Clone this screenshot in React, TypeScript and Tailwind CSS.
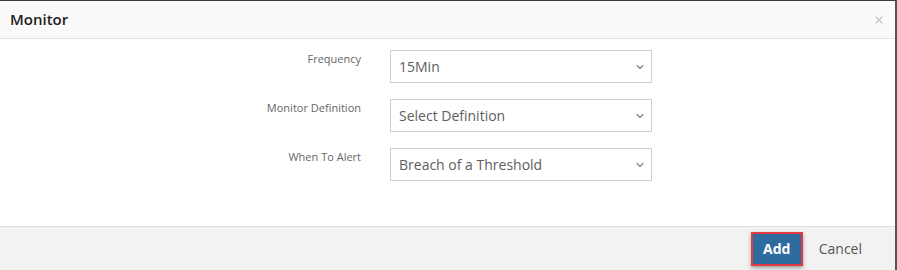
import { ChevronDown, X } from "lucide-react";

const fields = [
  { label: "Frequency", value: "15Min" },
  { label: "Monitor Definition", value: "Select Definition" },
  { label: "When To Alert", value: "Breach of a Threshold" },
];

export default function App() {
  return (
    <div className="w-[897px] h-[270px] bg-white border-t border-t-[#3a3a3a] border-r-2 border-r-[#555] flex flex-col font-['Open_Sans',sans-serif] overflow-hidden">
      {/* Header */}
      <div className="h-[38px] shrink-0 bg-[#fafafa] border-b border-[#e3e3e3] flex items-center justify-between pl-[10px] pr-[10px]">
        <h1 className="text-[15px] font-semibold text-[#222]">Monitor</h1>
        <X size={12} strokeWidth={2.5} className="text-[#c4c4c4]" />
      </div>

      {/* Body */}
      <div className="flex-1 pt-[11px] flex flex-col gap-[16px]">
        {fields.map((f) => (
          <div key={f.label} className="flex items-start">
            <label className="w-[361px] pt-[1px] text-right text-[11px] text-[#666]">{f.label}</label>
            <div className="ml-[29px] w-[262px] h-[33px] border border-[#cfcfcf] flex items-center justify-between pl-[8px] pr-[5px]">
              <span className="text-[14px] text-[#5e5e5e]">{f.value}</span>
              <ChevronDown size={12} strokeWidth={2.5} className="text-[#888]" />
            </div>
          </div>
        ))}
      </div>

      {/* Footer */}
      <div className="h-[44px] shrink-0 bg-[#f2f2f2] border-t border-[#dedede] flex items-center justify-end pr-[33px]">
        <button className="w-[52px] h-[34px] bg-[#2e6b9e] border-2 border-[#e43a3f] text-white text-[14px] font-bold shadow-[0_2px_4px_rgba(0,0,0,0.35)]">
          Add
        </button>
        <button className="ml-[16px] text-[14px] text-[#555]">Cancel</button>
      </div>
    </div>
  );
}
